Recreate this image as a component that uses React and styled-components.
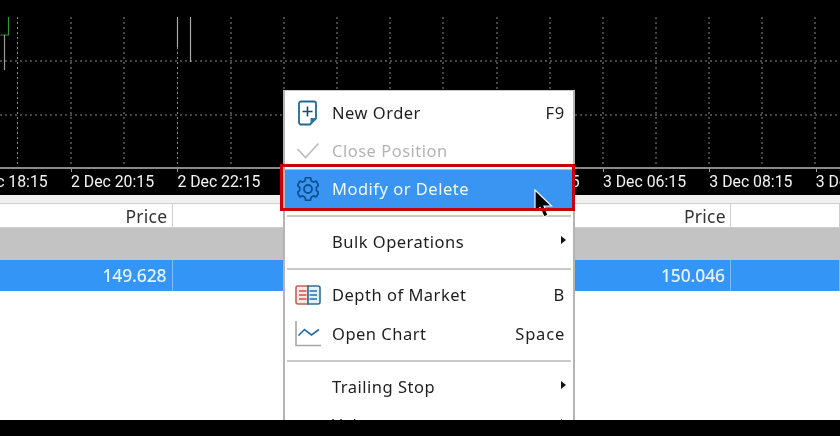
import React from "react";
import styled, { createGlobalStyle } from "styled-components";

const GlobalStyle = createGlobalStyle`
  html, body {
    margin: 0;
    padding: 0;
    background: #000;
  }
`;

// the two empty slots sit wholly behind the menu
const timeLabels = [
  "2 Dec 18:15",
  "2 Dec 20:15",
  "2 Dec 22:15",
  "",
  "",
  "3 Dec 04:15",
  "3 Dec 06:15",
  "3 Dec 08:15",
  "3 Dec 10:15",
];

const gridX = [17.5, 71, 124, 177.5, 231, 284, 337, 390, 443, 497, 550, 603, 656, 709, 762, 815];

const NewOrderIcon = () => (
  <svg width="22" height="26" viewBox="0 0 22 26" fill="none">
    <path d="M4 1.500h13a2 2 0 0 1 2 2v15l-6 6H4a2 2 0 0 1-2-2v-19a2 2 0 0 1 2-2z" stroke="#1f6a94" strokeWidth="1.8" />
    <path d="M10.500 6.500v10M5.500 11.500h10" stroke="#1d4a68" strokeWidth="1.6" />
    <path d="M13.500 24l5.500-6h-5.500z" fill="#2f7aa8" />
  </svg>
);

const CheckIcon = () => (
  <svg width="24" height="18" viewBox="0 0 24 18" fill="none">
    <path d="M1.500 7l8 8.500L22.500 1.500" stroke="#bcbcbc" strokeWidth="1.7" />
  </svg>
);

const GearIcon = () => (
  <svg width="22" height="24" viewBox="0 0 22 24" fill="none">
    <path
      d="M8.500 1.500h5l.8 3.300 2.200 1.300 3.200-1 2.400 4.300-2.400 2.300v2.600l2.400 2.300-2.400 4.300-3.200-1-2.200 1.300-.8 3.300h-5l-.8-3.300-2.200-1.300-3.200 1L-.1 16.600l2.400-2.300v-2.600L-.1 9.400l2.400-4.300 3.200 1 2.200-1.300z"
      transform="translate(0.600 -1) scale(0.95 1)"
      stroke="#0e4f8e"
      strokeWidth="1.800"
      strokeLinejoin="round"
    />
    <circle cx="11" cy="12" r="4" stroke="#0e4f8e" strokeWidth="1.800" />
  </svg>
);

const DepthIcon = () => (
  <svg width="26" height="20" viewBox="0 0 26 20" fill="none">
    <path d="M3 1h10v18H3a2 2 0 0 1-2-2V3a2 2 0 0 1 2-2z" fill="#fbe6e2" stroke="#b9655c" strokeWidth="1.600" />
    <path d="M13 1h10a2 2 0 0 1 2 2v14a2 2 0 0 1-2 2H13z" fill="#e3f0f8" stroke="#2f6f92" strokeWidth="1.600" />
    <path d="M4 6h7.500M4 10h7.500M4 14h7.500" stroke="#cf4f45" strokeWidth="1.600" />
    <path d="M14.500 6h7.500M14.500 10h7.500M14.500 14h7.500" stroke="#1f72b4" strokeWidth="1.600" />
  </svg>
);

const ChartIcon = () => (
  <svg width="26" height="26" viewBox="0 0 26 26" fill="none">
    <path d="M1 0v24.500h25" stroke="#a6a6a6" strokeWidth="1.600" />
    <path d="M3.500 14.500l6-6 7 5.500 7.500-5.500" stroke="#2b6a9f" strokeWidth="1.600" />
  </svg>
);

const rows = [
  { label: "New Order", shortcut: "F9", icon: <NewOrderIcon /> },
  { label: "Close Position", icon: <CheckIcon />, disabled: true },
  { label: "Modify or Delete", icon: <GearIcon />, active: true },
  { divider: true },
  { label: "Bulk Operations", submenu: true },
  { divider: true },
  { label: "Depth of Market", shortcut: "B", icon: <DepthIcon /> },
  { label: "Open Chart", shortcut: "Space", icon: <ChartIcon />, spaced: true },
  { divider: true },
  { label: "Trailing Stop", submenu: true },
  { label: "Volume", submenu: true },
];

const App = () => (
  <Page>
    <GlobalStyle />
    <Chart>
      <svg width="840" height="168" viewBox="0 0 840 168">
        {gridX.map((x) => (
          <line key={x} x1={x} y1="17" x2={x} y2="167" stroke="#8c8c8c" strokeDasharray="2 3" />
        ))}
        <line x1="0" y1="61" x2="840" y2="61" stroke="#8c8c8c" strokeDasharray="2 3" />
        <line x1="0" y1="115" x2="840" y2="115" stroke="#8c8c8c" strokeDasharray="2 3" />
        <path d="M0.500 35H8.500V17" fill="none" stroke="#2c9a34" strokeWidth="1.200" />
        <line x1="4.500" y1="35" x2="4.500" y2="70" stroke="#9a9a9a" strokeWidth="1.200" />
        <line x1="177.500" y1="17" x2="177.500" y2="47" stroke="#a8a8a8" strokeWidth="1.200" />
        <line x1="190.500" y1="17" x2="190.500" y2="62" stroke="#a8a8a8" strokeWidth="1.200" />
      </svg>
    </Chart>
    <TimeAxisClip>
      <TimeAxis>
        {timeLabels.map((label, i) => (
          <TimeLabel key={i}>{label}</TimeLabel>
        ))}
      </TimeAxis>
    </TimeAxisClip>
    <Gap />
    <Table>
      <HeaderCell>Price</HeaderCell>
      <HeaderCell>Price</HeaderCell>
      <HeaderCell />
      <GroupRow />
      <BlueCell>149.628</BlueCell>
      <BlueCell>150.046</BlueCell>
      <BlueCell />
    </Table>
    <Blank />
    <Footer />
    <Menu>
      {rows.map((row, i) =>
        row.divider ? (
          <Divider key={i} />
        ) : (
          <MenuRow key={row.label} $active={row.active} $disabled={row.disabled} $spaced={row.spaced}>
            <IconSlot>{row.icon}</IconSlot>
            <RowLabel>{row.label}</RowLabel>
            {row.shortcut && <Shortcut>{row.shortcut}</Shortcut>}
            {row.submenu && <Arrow />}
            {row.active && (
              <Cursor width="20" height="30" viewBox="0 0 20 30">
                <path d="M2 1v22l5-4.500 4 9.500 4-2-4-9h7.500z" fill="#000" stroke="#f4f8fc" strokeWidth="1.200" />
              </Cursor>
            )}
            {row.active && <RedFrame />}
          </MenuRow>
        )
      )}
    </Menu>
  </Page>
);

const Page = styled.div`
  position: relative;
  width: 840px;
  height: 436px;
  overflow: hidden;
  background: #fff;
  display: flex;
  flex-direction: column;
  font-family: "Noto Sans", "Noto Sans CJK JP", sans-serif;
  filter: blur(0.4px);
`;

const Chart = styled.div`
  height: 167px;
  background: #000;
  svg {
    display: block;
  }
`;

const TimeAxisClip = styled.div`
  height: 28px;
  overflow: hidden;
  background: #000;
  border-top: 2px solid #8a8a8a;
  box-sizing: border-box;
`;

const TimeAxis = styled.div`
  display: flex;
  margin-left: -35.4px;
  width: 960px;
  padding-top: 3px;
`;

const TimeLabel = styled.div`
  position: relative;
  flex: 0 0 106.4px;
  font-family: "Roboto", "Liberation Sans", sans-serif;
  font-size: 15.800px;
  line-height: 20px;
  color: #f4f4f4;
  white-space: nowrap;
  &::before {
    content: "";
    position: absolute;
    left: 0;
    top: -3px;
    width: 1px;
    height: 3px;
    background: #9a9a9a;
  }
`;

const Gap = styled.div`
  height: 8px;
  background: #f1f1f1;
`;

const Table = styled.div`
  display: grid;
  grid-template-columns: 172.500px 558.500px 109px;
  grid-template-rows: 25px 32px 31px;
  font-size: 17.500px;
`;

const HeaderCell = styled.div`
  box-sizing: border-box;
  border-top: 1px solid #cfcfcf;
  border-bottom: 1px solid #cfcfcf;
  border-right: 1px solid #cfcfcf;
  padding-right: 4px;
  text-align: right;
  line-height: 25px;
  color: #333;
  letter-spacing: 0.3px;
`;

const GroupRow = styled.div`
  grid-column: 1 / -1;
  background: #c3c3c3;
`;

const BlueCell = styled.div`
  box-sizing: border-box;
  background: #3396f6;
  border-right: 1px solid #7dbcf8;
  padding-right: 5px;
  text-align: right;
  line-height: 31px;
  font-weight: 500;
  color: #e6f2ff;
  letter-spacing: -0.1px;
`;

const Blank = styled.div`
  flex: 1;
  background: #fff;
`;

const Footer = styled.div`
  position: relative;
  z-index: 2;
  height: 16px;
  background: #000;
`;

const Menu = styled.div`
  position: absolute;
  left: 283px;
  top: 90px;
  width: 292px;
  box-sizing: border-box;
  padding-top: 3px;
  background: #fff;
  border-left: 2px solid #b4b4b4;
  border-right: 2px solid #b4b4b4;
  border-top: 1px solid #c8c8c8;
`;

const MenuRow = styled.div`
  position: relative;
  height: 38px;
  margin-top: ${(p) => (p.$spaced ? "1px" : "0")};
  display: flex;
  align-items: center;
  padding-right: 8px;
  font-size: 16.500px;
  letter-spacing: 0.5px;
  background: ${(p) => (p.$active ? "#3a94f2" : "transparent")};
  box-shadow: ${(p) => (p.$active ? "0 -1px 0 #a9bed4" : "none")};
  color: ${(p) => (p.$active ? "#f2f8ff" : p.$disabled ? "#b4b4b4" : "#1e1e1e")};
`;

const IconSlot = styled.div`
  flex: 0 0 47px;
  display: flex;
  justify-content: center;
  padding-right: 2px;
  box-sizing: border-box;
  svg {
    display: block;
  }
`;

const RowLabel = styled.span`
  margin-bottom: 2px;
`;

const Shortcut = styled.span`
  margin-left: auto;
  margin-bottom: 2px;
  letter-spacing: 0.8px;
`;

const Arrow = styled.i`
  margin-left: auto;
  margin-right: -1px;
  margin-top: -4px;
  width: 0;
  height: 0;
  border-top: 4px solid transparent;
  border-bottom: 4px solid transparent;
  border-left: 5px solid #111;
`;

const Divider = styled.div`
  height: 2px;
  margin: 7px 2px 6px;
  background: #c9c9c9;
`;

const RedFrame = styled.div`
  position: absolute;
  inset: -6px -2px -3px -5px;
  border: 3px solid #c8000c;
  pointer-events: none;
`;

const Cursor = styled.svg`
  position: absolute;
  left: 248px;
  top: 19px;
`;

export default App;
